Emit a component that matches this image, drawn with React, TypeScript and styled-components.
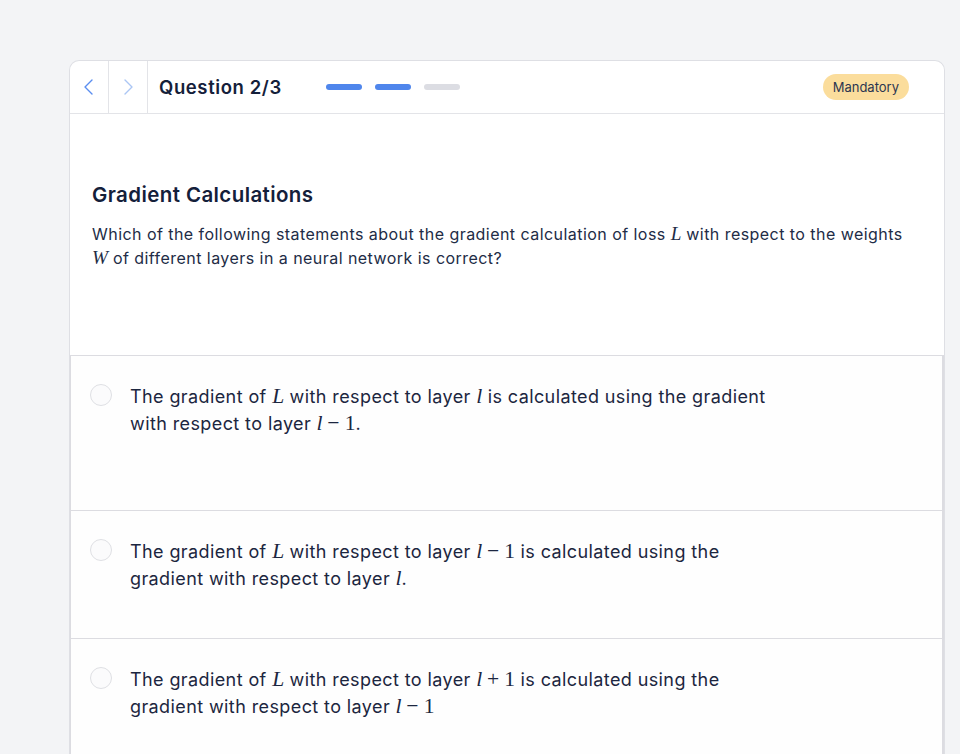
import styled, { createGlobalStyle } from "styled-components";

const GlobalStyle = createGlobalStyle`
    html, body {
        margin: 0;
        padding: 0;
        background: #f3f4f6;
        font-family: Inter, "Noto Sans", sans-serif;
        color: #1c2640;
    }
`;

const Page = styled.div`
    padding: 60px 15px 0 69px;
    height: 754px;
    box-sizing: border-box;
    overflow: hidden;
`;
const Card = styled.div`
    background: #fff;
    border: 1px solid #dedfe4;
    border-bottom: none;
    border-radius: 10px 10px 0 0;
    overflow: hidden;
`;
const Header = styled.div`
    height: 52px;
    display: flex;
    align-items: center;
    border-bottom: 1px solid #e3e4e8;
    padding-right: 35px;
`;
const NavButton = styled.button<{ $faded?: boolean }>`
    width: 39px;
    height: 100%;
    border: none;
    border-right: 1px solid #e3e4e8;
    background: transparent;
    display: flex;
    align-items: center;
    justify-content: center;
    padding: 0;
    color: ${(p) => (p.$faded ? "#abc6f4" : "#5a8ef0")};
`;
const Title = styled.div`
    margin-left: 11px;
    font-size: 18.5px;
    font-weight: 600;
    letter-spacing: 0.6px;
    color: #14203a;
`;
const Progress = styled.div`
    display: flex;
    gap: 13px;
    margin-left: 44px;
    flex: 1;
`;
const Step = styled.div<{ $done: boolean }>`
    width: 36px;
    height: 6px;
    border-radius: 3px;
    background: ${(p) => (p.$done ? "#4f86ec" : "#dcdde3")};
`;
const Badge = styled.span`
    background: #fbdd9c;
    color: #2b3650;
    font-size: 13px;
    padding: 5px 10px;
    border-radius: 14px;
`;
const Prompt = styled.div`
    padding: 68px 22px 85px 22px;
    border-bottom: 1px solid #e3e4e8;
`;
const Heading = styled.h2`
    margin: 0 0 15px;
    font-size: 20.5px;
    font-weight: 600;
    letter-spacing: 0.4px;
    color: #14203a;
`;
const Text = styled.p`
    margin: 0;
    font-size: 16px;
    line-height: 23px;
    letter-spacing: 0.45px;
    color: #222c46;
`;
const Math = styled.span<{ $italic?: boolean }>`
    font-family: "Liberation Serif", "DejaVu Serif", serif;
    font-style: ${(p) => (p.$italic === false ? "normal" : "italic")};
    font-size: 1.2em;
    letter-spacing: 0;
`;
const Op = styled.span`
    font-family: "Liberation Serif", "DejaVu Serif", serif;
    font-size: 1.2em;
    margin: 0 0.22em;
`;
const Option = styled.label<{ $height: number }>`
    display: flex;
    align-items: flex-start;
    gap: 18px;
    min-height: ${(p) => p.$height}px;
    box-sizing: border-box;
    padding: 28px 20px 20px 19px;
    background: #fefefe;
    border: 1px solid #dcdce1;
    border-right-width: 2px;
    margin-top: -1px;
    cursor: pointer;
`;
const Radio = styled.span`
    flex: none;
    width: 22px;
    height: 22px;
    border-radius: 50%;
    border: 1px solid #dfe0e4;
    background: #fbfbfc;
    box-sizing: border-box;
`;
const OptionText = styled.div`
    font-size: 18px;
    line-height: 27px;
    letter-spacing: 0.4px;
    color: #1c2640;
    margin-top: -1px;
    max-width: 650px;
`;

function Chevron({ dir }: { dir: "left" | "right" }) {
    return (
        <svg width="14" height="18" viewBox="0 0 14 18" fill="none">
            <path
                d={dir === "left" ? "M10 2 L3 9 L10 16" : "M4 2 L11 9 L4 16"}
                stroke="currentColor"
                strokeWidth="1.4"
                strokeLinecap="round"
                strokeLinejoin="round"
            />
        </svg>
    );
}

const I = ({ children }: { children: string }) => <Math>{children}</Math>;
const N = ({ children }: { children: string }) => <Math $italic={false}>{children}</Math>;

export default function App() {
    return (
        <>
            <GlobalStyle />
            <Page>
                <Card>
                    <Header>
                        <NavButton aria-label="Previous"><Chevron dir="left" /></NavButton>
                        <NavButton $faded aria-label="Next"><Chevron dir="right" /></NavButton>
                        <Title>Question 2/3</Title>
                        <Progress>
                            <Step $done />
                            <Step $done />
                            <Step $done={false} />
                        </Progress>
                        <Badge>Mandatory</Badge>
                    </Header>
                    <Prompt>
                        <Heading>Gradient Calculations</Heading>
                        <Text>
                            Which of the following statements about the gradient calculation of loss <I>L</I> with respect to the weights{" "}
                            <I>W</I> of different layers in a neural network is correct?
                        </Text>
                    </Prompt>
                    <Option $height={156}>
                        <Radio />
                        <OptionText>
                            The gradient of <I>L</I> with respect to layer <I>l</I> is calculated using the gradient with respect to layer{" "}
                            <I>l</I><Op>−</Op><N>1</N>.
                        </OptionText>
                    </Option>
                    <Option $height={129}>
                        <Radio />
                        <OptionText>
                            The gradient of <I>L</I> with respect to layer <I>l</I><Op>−</Op><N>1</N> is calculated using the gradient with respect to layer <I>l</I>.
                        </OptionText>
                    </Option>
                    <Option $height={129}>
                        <Radio />
                        <OptionText>
                            The gradient of <I>L</I> with respect to layer <I>l</I><Op>+</Op><N>1</N> is calculated using the gradient with respect to layer{" "}
                            <I>l</I><Op>−</Op><N>1</N>
                        </OptionText>
                    </Option>
                </Card>
            </Page>
        </>
    );
}
